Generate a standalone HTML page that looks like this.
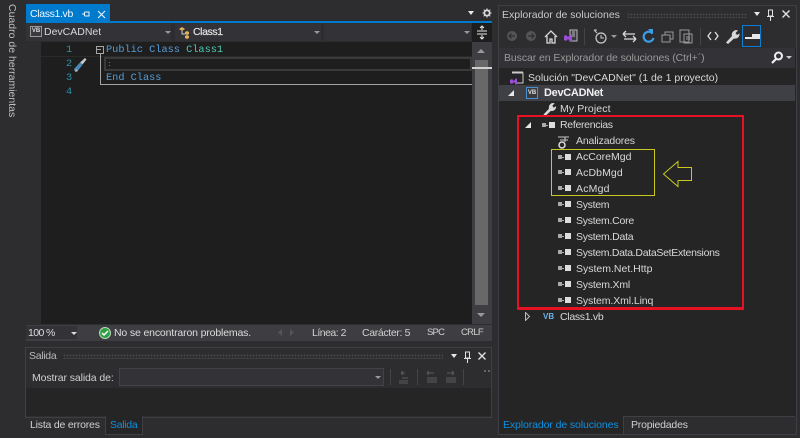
<!DOCTYPE html>
<html><head><meta charset="utf-8">
<style>
html,body{margin:0;padding:0;background:#2d2d30;}
#r{position:relative;width:800px;height:438px;overflow:hidden;background:#2d2d30;font-family:"Liberation Sans",sans-serif;font-size:10.5px;color:#d0d0d0;}
#r div,#r svg{position:absolute;}
.t{white-space:nowrap;line-height:14px;}
.m{font-family:"Liberation Mono",monospace;font-size:10.27px;white-space:nowrap;line-height:14px;}
.n{color:#2b91af;left:66px;width:8px;}
.ref{color:#d8d8d8;left:576px;}
</style></head><body>
<div id="r">
<!-- left strip -->
<div class="t" style="left:5px;top:4px;width:14px;height:120px;writing-mode:vertical-rl;color:#c0c0c0">Cuadro de herramientas</div>

<!-- tab -->
<div style="left:26px;top:4px;width:84px;height:19px;background:#007acc"></div>
<div style="left:26px;top:21px;width:466px;height:2px;background:#007acc"></div>
<div class="t" style="left:30px;top:7px;color:#f0f8ff;letter-spacing:-.35px">Class1.vb</div>
<svg style="left:82px;top:10px" width="8" height="8" viewBox="0 0 8 8"><path d="M0 4h2.500M2.500 2v4M2.500 2h4.500v4h-4.500" stroke="#e8f4ff" fill="none"/></svg>
<svg style="left:97px;top:10px" width="9" height="9" viewBox="0 0 9 9"><path d="M1 1l7 7M8 1l-7 7" stroke="#e8f4ff" stroke-width="1.100" fill="none"/></svg>
<svg style="left:467px;top:11px" width="8" height="5"><path d="M1 0h6l-3 4z" fill="#e8e8e8"/></svg>
<svg style="left:482px;top:8px" width="10" height="10" viewBox="0 0 12 12"><circle cx="6" cy="6" r="3.200" fill="none" stroke="#d8d8d8" stroke-width="2.200"/><path d="M6 .5v2M6 9.500v2M.5 6h2M9.500 6h2M2 2l1.500 1.500M8.500 8.500L10 10M10 2L8.500 3.500M3.500 8.500L2 10" stroke="#d8d8d8" stroke-width="1.200"/></svg>

<!-- dropdown bar -->
<div style="left:26px;top:23px;width:145px;height:18px;background:#333337"></div>
<div style="left:175px;top:23px;width:146px;height:18px;background:#333337"></div>
<div style="left:324px;top:23px;width:147px;height:18px;background:#333337"></div>
<div style="left:30px;top:26px;width:10px;height:9px;border:1px solid #9a9a9a;background:#3a3a3e;color:#ddd;font-size:6px;line-height:9px;text-align:center;font-weight:bold">VB</div>
<div class="t" style="left:44px;top:25px;color:#d8d8d8">DevCADNet</div>
<svg style="left:165px;top:31px" width="6" height="4"><path d="M0 0h6l-3 3z" fill="#999"/></svg>
<svg style="left:178px;top:26px" width="14" height="14" viewBox="0 0 14 14"><path d="M1 3l3-2 3 2-3 2zM7 6l2-1 2 1v2l-2 1-2-1zM7 10l2-1 2 1v2l-2 1-2-1z" fill="#e0b060"/><path d="M4 5v3h3" stroke="#ccc" fill="none"/></svg>
<div class="t" style="left:193px;top:25px;color:#e0e0e0;letter-spacing:-.4px;-webkit-text-stroke:.2px #e0e0e0">Class1</div>
<svg style="left:314px;top:31px" width="6" height="4"><path d="M0 0h6l-3 3z" fill="#999"/></svg>
<svg style="left:464px;top:31px" width="6" height="4"><path d="M0 0h6l-3 3z" fill="#999"/></svg>
<div style="left:472px;top:23px;width:20px;height:19px;background:#1e1e1e"></div>
<svg style="left:475px;top:25px" width="14" height="15" viewBox="0 0 14 15"><path d="M2 6h10M2 9h10M7 1v4M7 10v4M5 3l2-2 2 2M5 12l2 2 2-2" stroke="#e8e8e8" fill="none"/></svg>

<!-- editor -->
<div style="left:26px;top:42px;width:15px;height:282px;background:#2d2d30"></div>
<div style="left:41px;top:42px;width:431px;height:282px;background:#1e1e1e"></div>
<div style="left:41px;top:56px;width:431px;height:1px;background:#2a2a2a"></div>
<div class="m n" style="top:43px">1</div>
<div class="m n" style="top:57px">2</div>
<div class="m n" style="top:71px">3</div>
<div class="m n" style="top:85px">4</div>
<svg style="left:72px;top:56px" width="16" height="18" viewBox="0 0 16 18"><path d="M13 2l1.500 1.500-4 5-2.500-2z" fill="#c8c8c8"/><path d="M8 6.500l2.500 2.500-4.500 5.500L2.500 15l-.5-2z" fill="#4a88b8"/><path d="M3 16l3-1-2-2z" fill="#c8c8c8"/></svg>
<div style="left:96px;top:46px;width:6px;height:6px;border:1px solid #a5a5a5"></div>
<div style="left:97px;top:49px;width:4px;height:1px;background:#a5a5a5"></div>
<div style="left:100px;top:54px;width:1px;height:30px;background:#a5a5a5"></div>
<div style="left:100px;top:84px;width:372px;height:1px;background:#a5a5a5"></div>
<div class="m" style="left:106px;top:43px"><span style="color:#569cd6">Public Class </span><span style="color:#4ec9b0">Class1</span></div>
<div style="left:104px;top:57px;width:364px;height:10px;border:2px solid #3a3a3a"></div>
<div style="left:109px;top:62px;width:1px;height:1px;background:#777;box-shadow:0 3px 0 #777"></div>
<div class="m" style="left:106px;top:71px;color:#569cd6">End Class</div>

<!-- scrollbar -->
<div style="left:472px;top:42px;width:20px;height:282px;background:#3e3e42"></div>
<svg style="left:477px;top:48px" width="9" height="5"><path d="M0 5h8l-4-4z" fill="#999"/></svg>
<div style="left:475px;top:60px;width:13px;height:245px;background:#686868"></div>
<div style="left:472px;top:67px;width:20px;height:2px;background:#d0d0d0"></div>
<svg style="left:477px;top:313px" width="9" height="5"><path d="M0 0h8l-4 4z" fill="#999"/></svg>

<!-- status bar -->
<div style="left:26px;top:325px;width:466px;height:16px;background:#3e3e42"></div>
<div style="left:26px;top:326px;width:51px;height:13px;background:#333337"></div>
<div class="t" style="left:28px;top:326px;color:#ddd;letter-spacing:-.6px">100 %</div>
<svg style="left:71px;top:332px" width="6" height="4"><path d="M0 0h6l-3 3z" fill="#ddd"/></svg>
<svg style="left:99px;top:327px" width="12" height="12" viewBox="0 0 12 12"><circle cx="6" cy="6" r="5.500" fill="#2f9e44" stroke="#b8d8b8"/><path d="M3 6l2 2 4-4" stroke="#fff" stroke-width="1.500" fill="none"/></svg>
<div class="t" style="left:114px;top:326px;color:#dcdcdc;letter-spacing:-.15px">No se encontraron problemas.</div>
<svg style="left:277px;top:329px" width="18" height="8"><path d="M5 0v7L1 3.500zM13 0v7l4-3.500z" fill="#555"/></svg>
<div class="t" style="left:312px;top:326px;color:#d0d0d0;letter-spacing:-.5px">Línea: 2</div>
<div class="t" style="left:362px;top:326px;color:#d0d0d0;letter-spacing:-.35px">Carácter: 5</div>
<div class="t" style="left:427px;top:326px;color:#d0d0d0;font-size:9.5px;letter-spacing:-.8px">SPC</div>
<div class="t" style="left:461px;top:326px;color:#d0d0d0;font-size:9.5px;letter-spacing:-.7px">CRLF</div>

<!-- Salida panel -->
<div style="left:25px;top:347px;width:465px;height:69px;border:1px solid #3f3f46;background:#2d2d30"></div>
<div class="t" style="left:29px;top:349px;color:#b8b8b8;letter-spacing:-.3px">Salida</div>
<div style="left:63px;top:354px;width:380px;height:5px;background-image:radial-gradient(#46464a 40%,transparent 45%);background-size:3px 3px"></div>
<svg style="left:450px;top:354px" width="8" height="5"><path d="M1 0h6l-3 4z" fill="#e8e8e8"/></svg>
<svg style="left:463px;top:351px" width="9" height="13" viewBox="0 0 9 13"><path d="M2.500 1h4v6h-4zM1 7.500h7M4.500 8v4" stroke="#e0e0e0" fill="none"/></svg>
<svg style="left:477px;top:351px" width="10" height="10" viewBox="0 0 10 10"><path d="M1.500 1.500l7 7M8.500 1.500l-7 7" stroke="#e0e0e0" stroke-width="1.400" fill="none"/></svg>
<div class="t" style="left:32px;top:371px;color:#d0d0d0;letter-spacing:-.1px">Mostrar salida de:</div>
<div style="left:119px;top:368px;width:263px;height:16px;border:1px solid #434346;background:#333337"></div>
<svg style="left:375px;top:376px" width="6" height="4"><path d="M0 0h6l-3 3z" fill="#999"/></svg>
<div style="left:390px;top:369px;width:1px;height:16px;background:#444"></div>
<div style="left:417px;top:369px;width:1px;height:16px;background:#444"></div>
<div style="left:463px;top:369px;width:1px;height:16px;background:#444"></div>
<svg style="left:398px;top:370px" width="14" height="14" viewBox="0 0 14 14"><path d="M3 3h4M3 3l2-2M3 3l2 2M4 8h6M1 11h9M1 13h9" stroke="#5a5a5e" fill="none"/></svg>
<svg style="left:426px;top:370px" width="12" height="14" viewBox="0 0 12 14"><path d="M1 3h7M1 3l2-2M1 3l2 2M1 8h10M1 10h10M1 12h10" stroke="#5a5a5e" fill="none"/></svg>
<svg style="left:445px;top:370px" width="12" height="14" viewBox="0 0 12 14"><path d="M2 3h7M9 3L7 1M9 3L7 5M1 8h10M1 10h10M1 12h10" stroke="#5a5a5e" fill="none"/></svg>
<div style="left:484px;top:370px;width:2px;height:2px;background:#666;box-shadow:4px 0 0 #666"></div>
<div style="left:26px;top:388px;width:465px;height:28px;background:#252526"></div>
<!-- bottom tabs -->
<div class="t" style="left:30px;top:418px;color:#d0d0d0;letter-spacing:-.2px">Lista de errores</div>
<div style="left:105px;top:416px;width:36px;height:18px;background:#252526;border:1px solid #3f3f46;border-top:none"></div>
<div class="t" style="left:110px;top:418px;color:#0e90e0;letter-spacing:-.3px">Salida</div>

<!-- Solution explorer -->
<div style="left:498px;top:5px;width:297px;height:428px;border:1px solid #3f3f46;background:#252526"></div>
<div style="left:499px;top:6px;width:297px;height:42px;background:#2d2d30"></div>
<div class="t" style="left:502px;top:8px;color:#c8c8c8">Explorador de soluciones</div>
<div style="left:627px;top:13px;width:120px;height:5px;background-image:radial-gradient(#46464a 40%,transparent 45%);background-size:3px 3px"></div>
<svg style="left:753px;top:12px" width="8" height="5"><path d="M1 0h6l-3 4z" fill="#e8e8e8"/></svg>
<svg style="left:766px;top:9px" width="9" height="13" viewBox="0 0 9 13"><path d="M2.500 1h4v6h-4zM1 7.500h7M4.500 8v4" stroke="#e0e0e0" fill="none"/></svg>
<svg style="left:781px;top:9px" width="10" height="10" viewBox="0 0 10 10"><path d="M1.500 1.500l7 7M8.500 1.500l-7 7" stroke="#e0e0e0" stroke-width="1.400" fill="none"/></svg>

<!-- toolbar -->
<svg style="left:505px;top:28px" width="40" height="16" viewBox="0 0 40 16"><circle cx="7" cy="8" r="5" fill="#555558"/><path d="M10 8H4M6.500 5.500L4 8l2.500 2.500" stroke="#2d2d30" stroke-width="1.200" fill="none"/><circle cx="26" cy="8" r="5" fill="#555558"/><path d="M23 8h6M26.500 5.500L29 8l-2.500 2.500" stroke="#2d2d30" stroke-width="1.200" fill="none"/></svg>
<svg style="left:544px;top:29px" width="14" height="15" viewBox="0 0 14 15"><path d="M1 8l6-6 6 6M3 7v7h3v-4h2v4h3V7" stroke="#d8d8d8" stroke-width="1.300" fill="none"/></svg>
<svg style="left:563px;top:29px" width="15" height="14" viewBox="0 0 15 14"><path d="M7 1h7v11H7z" fill="#3a3a3e" stroke="#bbb"/><path d="M9 3h3M9 5h3M9 7h3" stroke="#bbb"/><path d="M1 7l2-1 2 2 3-3 1 1v6l-1 1-3-3-2 2-2-1z" fill="#9b4fd8"/></svg>
<div style="left:584px;top:28px;width:1px;height:17px;background:#444"></div>
<svg style="left:592px;top:28px" width="17" height="17" viewBox="0 0 17 17"><path d="M2 2l3 3M5 2H2" stroke="#ccc" fill="none"/><circle cx="9" cy="10" r="5" fill="none" stroke="#ccc" stroke-width="1.200"/><path d="M9 7v3h3" stroke="#ccc" fill="none"/></svg>
<svg style="left:611px;top:35px" width="6" height="4"><path d="M0 0h6l-3 3z" fill="#999"/></svg>
<svg style="left:622px;top:30px" width="15" height="13" viewBox="0 0 15 13"><path d="M1 4h12M1 4l3-3M1 4l3 3M14 9H2M14 9l-3-3M14 9l-3 3" stroke="#d8d8d8" stroke-width="1.300" fill="none"/></svg>
<svg style="left:641px;top:29px" width="14" height="15" viewBox="0 0 14 15"><path d="M11.500 4.500A5 5 0 1 0 12.500 9" fill="none" stroke="#3a9ee8" stroke-width="2.200"/><path d="M7 0l5 0v5z" fill="#3a9ee8"/></svg>
<svg style="left:661px;top:30px" width="14" height="13" viewBox="0 0 14 13"><path d="M1 5h8v7H1zM4 5V2h8v7H9" stroke="#999" fill="none"/></svg>
<svg style="left:679px;top:29px" width="15" height="15" viewBox="0 0 15 15"><path d="M1 1h9v12H1zM5 5h8v9H5z" stroke="#999" fill="none"/><path d="M7 8h4M7 10h4" stroke="#999"/></svg>
<div style="left:700px;top:28px;width:1px;height:17px;background:#444"></div>
<svg style="left:707px;top:31px" width="12" height="10" viewBox="0 0 12 10"><path d="M4 1L1 5l3 4M8 1l3 4-3 4" stroke="#e0e0e0" stroke-width="1.300" fill="none"/></svg>
<svg style="left:725px;top:29px" width="15" height="16" viewBox="0 0 15 16"><path d="M1 13.500L7 7A4.500 4.500 0 0 1 13 1.500L10.500 4 12 6 14.500 4.500A4.500 4.500 0 0 1 9 9.500L3 15z" fill="#d8d8d8"/></svg>
<div style="left:742px;top:25px;width:17px;height:20px;border:1px solid #0e7fd0"></div>
<div style="left:745px;top:37px;width:15px;height:2px;background:#e8e8e8"></div>
<div style="left:752px;top:34px;width:8px;height:3px;background:#e8e8e8"></div>

<!-- search -->
<div style="left:499px;top:48px;width:296px;height:20px;background:#333337"></div>
<div class="t" style="left:504px;top:51px;color:#999;letter-spacing:-.08px">Buscar en Explorador de soluciones (Ctrl+´)</div>
<svg style="left:770px;top:51px" width="14" height="14" viewBox="0 0 14 14"><circle cx="8.500" cy="5" r="3.500" fill="none" stroke="#f0f0f0" stroke-width="2"/><path d="M6 8l-4 4" stroke="#f0f0f0" stroke-width="2.200"/></svg>
<svg style="left:786px;top:56px" width="6" height="4"><path d="M0 0h6l-3 3z" fill="#ccc"/></svg>

<!-- tree -->
<svg style="left:509px;top:71px" width="15" height="14" viewBox="0 0 15 14"><path d="M3 2h11v10H8" fill="none" stroke="#ccc"/><path d="M3 1.500h11" stroke="#ccc" stroke-width="2"/><path d="M1 9l2-1 2 2 2-3 1 1v5l-1 1-2-3-2 2-2-1z" fill="#9b4fd8"/></svg>
<div class="t" style="left:528px;top:71px;color:#d8d8d8">Solución "DevCADNet" (1 de 1 proyecto)</div>
<div style="left:499px;top:85px;width:296px;height:16px;background:#3f3f46"></div>
<svg style="left:508px;top:90px" width="7" height="7"><path d="M6 0v6H0z" fill="#e8e8e8"/></svg>
<div style="left:526px;top:87px;width:10px;height:10px;border:1px solid #4a90d0;background:#3a3a3e;color:#e0e0e0;font-size:6px;line-height:10px;text-align:center;font-weight:bold">VB</div>
<div class="t" style="left:544px;top:86px;color:#f0f0f0;font-size:11px;font-weight:bold;letter-spacing:-.3px">DevCADNet</div>
<svg style="left:542px;top:102px" width="15" height="15" viewBox="0 0 15 16"><path d="M1 13.500L7 7A4.500 4.500 0 0 1 13 1.500L10.500 4 12 6 14.500 4.500A4.500 4.500 0 0 1 9 9.500L3 15z" fill="#d8d8d8"/></svg>
<div class="t" style="left:560px;top:102px;color:#d8d8d8;letter-spacing:.1px">My Project</div>
<svg style="left:525px;top:122px" width="7" height="7"><path d="M6 0v6H0z" fill="#e8e8e8"/></svg>
<svg style="left:542px;top:122px" width="14" height="7"><rect x="0" y="1" width="4" height="4" fill="#aaa"/><rect x="4" y="3" width="2" height="1" fill="#aaa"/><rect x="7" y="0" width="6" height="6" fill="#ddd"/></svg>
<div class="t" style="left:560px;top:118px;color:#d8d8d8;letter-spacing:-.3px">Referencias</div>
<svg style="left:557px;top:135px" width="14" height="14" viewBox="0 0 14 14"><path d="M1 2h11M3 5h8M8 2v5" stroke="#ccc" fill="none"/><circle cx="5" cy="10" r="3" fill="none" stroke="#ddd" stroke-width="1.500"/></svg>
<div class="t" style="left:576px;top:134px;color:#d8d8d8;letter-spacing:-.15px">Analizadores</div>

<svg style="left:558px;top:154px" width="14" height="7"><rect x="0" y="1" width="4" height="4" fill="#aaa"/><rect x="4" y="3" width="2" height="1" fill="#aaa"/><rect x="7" y="0" width="6" height="6" fill="#ddd"/></svg>
<div class="t ref" style="top:150px">AcCoreMgd</div>
<svg style="left:558px;top:169px" width="14" height="7"><rect x="0" y="1" width="4" height="4" fill="#aaa"/><rect x="4" y="3" width="2" height="1" fill="#aaa"/><rect x="7" y="0" width="6" height="6" fill="#ddd"/></svg>
<div class="t ref" style="top:166px;letter-spacing:.1px">AcDbMgd</div>
<svg style="left:558px;top:185px" width="14" height="7"><rect x="0" y="1" width="4" height="4" fill="#aaa"/><rect x="4" y="3" width="2" height="1" fill="#aaa"/><rect x="7" y="0" width="6" height="6" fill="#ddd"/></svg>
<div class="t ref" style="top:182px;letter-spacing:.2px">AcMgd</div>
<svg style="left:558px;top:201px" width="14" height="7"><rect x="0" y="1" width="4" height="4" fill="#aaa"/><rect x="4" y="3" width="2" height="1" fill="#aaa"/><rect x="7" y="0" width="6" height="6" fill="#ddd"/></svg>
<div class="t ref" style="top:198px;letter-spacing:-.3px">System</div>
<svg style="left:558px;top:217px" width="14" height="7"><rect x="0" y="1" width="4" height="4" fill="#aaa"/><rect x="4" y="3" width="2" height="1" fill="#aaa"/><rect x="7" y="0" width="6" height="6" fill="#ddd"/></svg>
<div class="t ref" style="top:214px;letter-spacing:-.25px">System.Core</div>
<svg style="left:558px;top:233px" width="14" height="7"><rect x="0" y="1" width="4" height="4" fill="#aaa"/><rect x="4" y="3" width="2" height="1" fill="#aaa"/><rect x="7" y="0" width="6" height="6" fill="#ddd"/></svg>
<div class="t ref" style="top:230px;letter-spacing:-.25px">System.Data</div>
<svg style="left:558px;top:249px" width="14" height="7"><rect x="0" y="1" width="4" height="4" fill="#aaa"/><rect x="4" y="3" width="2" height="1" fill="#aaa"/><rect x="7" y="0" width="6" height="6" fill="#ddd"/></svg>
<div class="t ref" style="top:246px;letter-spacing:-.3px">System.Data.DataSetExtensions</div>
<svg style="left:558px;top:265px" width="14" height="7"><rect x="0" y="1" width="4" height="4" fill="#aaa"/><rect x="4" y="3" width="2" height="1" fill="#aaa"/><rect x="7" y="0" width="6" height="6" fill="#ddd"/></svg>
<div class="t ref" style="top:262px">System.Net.Http</div>
<svg style="left:558px;top:281px" width="14" height="7"><rect x="0" y="1" width="4" height="4" fill="#aaa"/><rect x="4" y="3" width="2" height="1" fill="#aaa"/><rect x="7" y="0" width="6" height="6" fill="#ddd"/></svg>
<div class="t ref" style="top:278px;letter-spacing:-.2px">System.Xml</div>
<svg style="left:558px;top:297px" width="14" height="7"><rect x="0" y="1" width="4" height="4" fill="#aaa"/><rect x="4" y="3" width="2" height="1" fill="#aaa"/><rect x="7" y="0" width="6" height="6" fill="#ddd"/></svg>
<div class="t ref" style="top:294px;letter-spacing:-.1px">System.Xml.Linq</div>

<svg style="left:525px;top:312px" width="6" height="9"><path d="M.5.500l4 4-4 4z" fill="none" stroke="#bbb"/></svg>
<div class="t" style="left:543px;top:310px;color:#6db3e8;font-size:8px;font-weight:bold">VB</div>
<div class="t" style="left:560px;top:310px;color:#d8d8d8;letter-spacing:-.3px">Class1.vb</div>

<!-- annotations -->
<div style="left:517px;top:115px;width:223px;height:190px;border:2px solid #e81123;border-bottom-width:3px"></div>
<div style="left:551px;top:149px;width:102px;height:45px;border:1px solid #c8c820"></div>
<svg style="left:662px;top:159px" width="32" height="30" viewBox="0 0 32 30"><path d="M1.500 15L16 2.500V8.500H29.500V21.500H16V27.500z" fill="none" stroke="#c8c820"/></svg>

<!-- right bottom tabs -->
<div style="left:624px;top:416px;width:171px;height:1px;background:#3f3f46"></div>
<div style="left:624px;top:417px;width:172px;height:17px;background:#2d2d30"></div>
<div style="left:623px;top:416px;width:1px;height:18px;background:#3f3f46"></div>
<div class="t" style="left:503px;top:418px;color:#0e90e0;letter-spacing:-.1px">Explorador de soluciones</div>
<div class="t" style="left:631px;top:418px;color:#d0d0d0;letter-spacing:-.2px">Propiedades</div>
</div>
</body></html>
